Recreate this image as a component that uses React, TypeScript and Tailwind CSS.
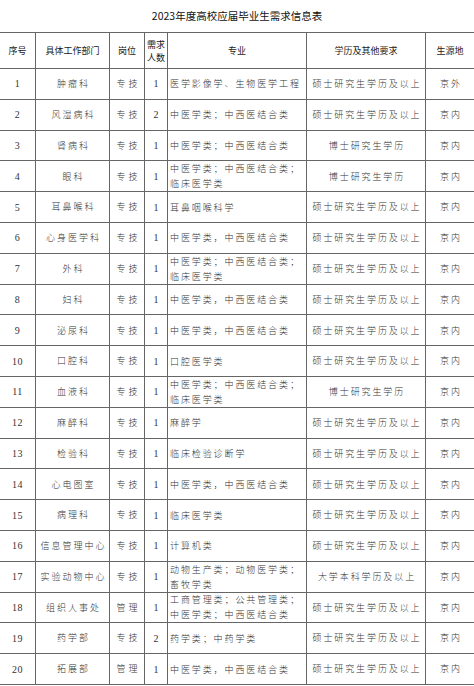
import React from 'react';

type Row = {
  no: number;
  dept: string;
  post: string;
  count: number;
  major: string[];
  edu: string;
  origin: string;
};

const MASTER = '硕士研究生学历及以上';
const DOCTOR = '博士研究生学历';

const rows: Row[] = [
  { no: 1, dept: '肿瘤科', post: '专技', count: 1, major: ['医学影像学、生物医学工程'], edu: MASTER, origin: '京外' },
  { no: 2, dept: '风湿病科', post: '专技', count: 2, major: ['中医学类；中西医结合类'], edu: MASTER, origin: '京内' },
  { no: 3, dept: '肾病科', post: '专技', count: 1, major: ['中医学类；中西医结合类'], edu: DOCTOR, origin: '京内' },
  { no: 4, dept: '眼科', post: '专技', count: 1, major: ['中医学类；中西医结合类；', '临床医学类'], edu: DOCTOR, origin: '京内' },
  { no: 5, dept: '耳鼻喉科', post: '专技', count: 1, major: ['耳鼻咽喉科学'], edu: MASTER, origin: '京内' },
  { no: 6, dept: '心身医学科', post: '专技', count: 1, major: ['中医学类，中西医结合类'], edu: MASTER, origin: '京内' },
  { no: 7, dept: '外科', post: '专技', count: 1, major: ['中医学类；中西医结合类；', '临床医学类'], edu: MASTER, origin: '京内' },
  { no: 8, dept: '妇科', post: '专技', count: 1, major: ['中医学类，中西医结合类'], edu: MASTER, origin: '京内' },
  { no: 9, dept: '泌尿科', post: '专技', count: 1, major: ['中医学类，中西医结合类'], edu: MASTER, origin: '京内' },
  { no: 10, dept: '口腔科', post: '专技', count: 1, major: ['口腔医学类'], edu: MASTER, origin: '京内' },
  { no: 11, dept: '血液科', post: '专技', count: 1, major: ['中医学类；中西医结合类；', '临床医学类'], edu: DOCTOR, origin: '京内' },
  { no: 12, dept: '麻醉科', post: '专技', count: 1, major: ['麻醉学'], edu: MASTER, origin: '京内' },
  { no: 13, dept: '检验科', post: '专技', count: 1, major: ['临床检验诊断学'], edu: MASTER, origin: '京内' },
  { no: 14, dept: '心电图室', post: '专技', count: 1, major: ['中医学类，中西医结合类'], edu: MASTER, origin: '京内' },
  { no: 15, dept: '病理科', post: '专技', count: 1, major: ['临床医学类'], edu: MASTER, origin: '京内' },
  { no: 16, dept: '信息管理中心', post: '专技', count: 1, major: ['计算机类'], edu: MASTER, origin: '京内' },
  { no: 17, dept: '实验动物中心', post: '专技', count: 1, major: ['动物生产类；动物医学类；', '畜牧学类'], edu: '大学本科学历及以上', origin: '京内' },
  { no: 18, dept: '组织人事处', post: '管理', count: 1, major: ['工商管理类；公共管理类；', '中医学类；中西医结合类'], edu: MASTER, origin: '京内' },
  { no: 19, dept: '药学部', post: '专技', count: 2, major: ['药学类；中药学类'], edu: MASTER, origin: '京内' },
  { no: 20, dept: '拓展部', post: '管理', count: 1, major: ['中医学类，中西医结合类'], edu: MASTER, origin: '京内' },
];

const cjk = "font-['Noto_Sans_CJK_SC',sans-serif]";
const serif = "font-['Liberation_Serif','Noto_Sans_CJK_SC',serif]";

export default function App() {
  return (
    <div className={`w-[474px] h-[686px] overflow-hidden bg-white ${cjk}`}>
      <div className="h-[32px] flex items-center justify-center text-[10.5px] text-[#111]">
        <span>2023年度高校应届毕业生需求信息表</span>
      </div>

      <div className="border-t border-[#666]">
        {/* header */}
        <div className="flex h-[36px] border-b border-[#666] text-[9px] text-[#1a1a1a]">
          <div className="w-[36px] flex items-center justify-center border-r border-[#666]">序号</div>
          <div className="w-[74px] flex items-center justify-center border-r border-[#666]">具体工作部门</div>
          <div className="w-[35px] flex items-center justify-center border-r border-[#666]">岗位</div>
          <div className="w-[23px] flex flex-col items-center justify-center border-r border-[#666] leading-[13px]">
            <span>需求</span>
            <span>人数</span>
          </div>
          <div className="w-[139px] flex items-center justify-center border-r border-[#666]">专业</div>
          <div className="w-[119px] flex items-center justify-center border-r border-[#666]">学历及其他要求</div>
          <div className="w-[48px] flex items-center justify-center">生源地</div>
        </div>

        {rows.map((r) => (
          <div key={r.no} className="flex h-[30.8px] border-b border-[#666] text-[9px] text-[#333] font-light">
            <div className={`w-[36px] flex items-center justify-center border-r border-[#666] text-[10px] tracking-[0.5px] ${serif}`}>
              {r.no}
            </div>
            <div className="w-[74px] flex items-center justify-center border-r border-[#666] tracking-[2px] pl-[2px] whitespace-nowrap">
              {r.dept}
            </div>
            <div className="w-[35px] flex items-center justify-center border-r border-[#666] tracking-[3px] pl-[3px]">
              {r.post}
            </div>
            <div className={`w-[23px] flex items-center justify-center border-r border-[#666] text-[10px] ${serif}`}>
              {r.count}
            </div>
            <div className="w-[139px] flex flex-col justify-center border-r border-[#666] pl-[2px] tracking-[1.9px] leading-[15px] whitespace-nowrap">
              {r.major.map((m) => (
                <span key={m}>{m}</span>
              ))}
            </div>
            <div className="w-[119px] flex items-center justify-center border-r border-[#666] tracking-[1.9px] pl-[2px] whitespace-nowrap">
              {r.edu}
            </div>
            <div className="w-[48px] flex items-center justify-center tracking-[2px] pl-[2px]">
              {r.origin}
            </div>
          </div>
        ))}
      </div>
    </div>
  );
}
